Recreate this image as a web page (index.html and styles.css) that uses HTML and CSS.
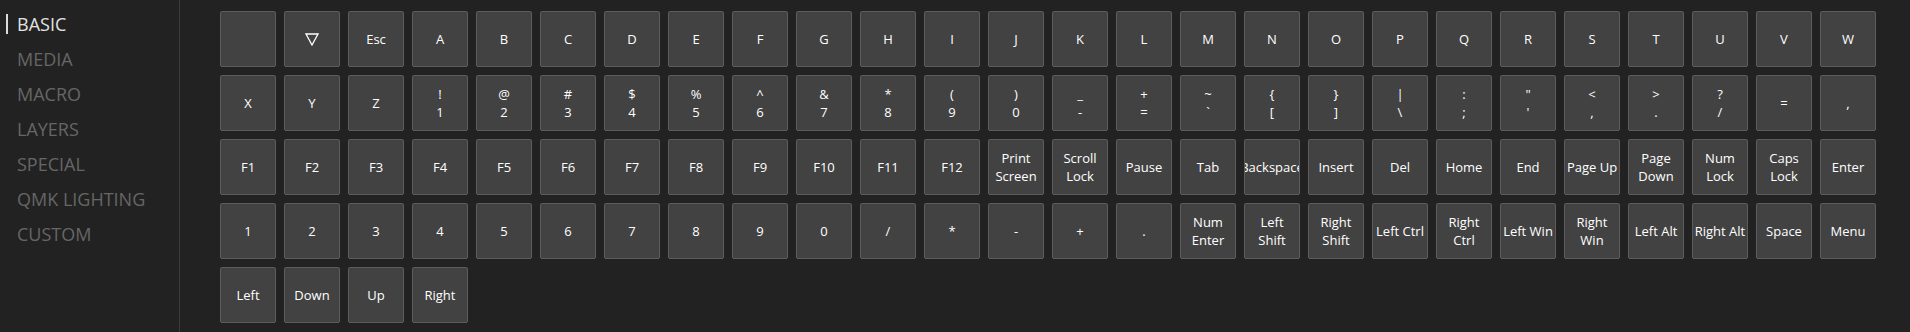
FILE: index.html
```html
<!DOCTYPE html>
<html>
<head>
<meta charset="utf-8">
<link rel="stylesheet" href="styles.css">
</head>
<body>
<div class="app">
  <nav class="sidebar">
    <div class="nav-item active"><span class="marker"></span>BASIC</div>
    <div class="nav-item"><span class="marker"></span>MEDIA</div>
    <div class="nav-item"><span class="marker"></span>MACRO</div>
    <div class="nav-item"><span class="marker"></span>LAYERS</div>
    <div class="nav-item"><span class="marker"></span>SPECIAL</div>
    <div class="nav-item"><span class="marker"></span>QMK LIGHTING</div>
    <div class="nav-item"><span class="marker"></span>CUSTOM</div>
  </nav>
  <main class="keys">
    <div class="key"></div>
    <div class="key"><svg class="tri" width="14" height="13" viewBox="0 0 14 13"><polygon points="1,1 13,1 7,12" fill="none" stroke="#fff" stroke-width="1.3"/></svg></div>
    <div class="key">Esc</div>
    <div class="key">A</div><div class="key">B</div><div class="key">C</div><div class="key">D</div><div class="key">E</div><div class="key">F</div><div class="key">G</div><div class="key">H</div><div class="key">I</div><div class="key">J</div><div class="key">K</div><div class="key">L</div><div class="key">M</div><div class="key">N</div><div class="key">O</div><div class="key">P</div><div class="key">Q</div><div class="key">R</div><div class="key">S</div><div class="key">T</div><div class="key">U</div><div class="key">V</div><div class="key">W</div>

    <div class="key">X</div><div class="key">Y</div><div class="key">Z</div>
    <div class="key">!<br>1</div><div class="key">@<br>2</div><div class="key">#<br>3</div><div class="key">$<br>4</div><div class="key">%<br>5</div><div class="key">^<br>6</div><div class="key">&amp;<br>7</div><div class="key">*<br>8</div><div class="key">(<br>9</div><div class="key">)<br>0</div>
    <div class="key">_<br>-</div><div class="key">+<br>=</div><div class="key">~<br>`</div><div class="key">{<br>[</div><div class="key">}<br>]</div><div class="key">|<br>\</div><div class="key">:<br>;</div><div class="key">"<br>'</div><div class="key">&lt;<br>,</div><div class="key">&gt;<br>.</div><div class="key">?<br>/</div>
    <div class="key">=</div><div class="key">,</div>

    <div class="key">F1</div><div class="key">F2</div><div class="key">F3</div><div class="key">F4</div><div class="key">F5</div><div class="key">F6</div><div class="key">F7</div><div class="key">F8</div><div class="key">F9</div><div class="key">F10</div><div class="key">F11</div><div class="key">F12</div>
    <div class="key">Print<br>Screen</div><div class="key">Scroll<br>Lock</div><div class="key">Pause</div><div class="key">Tab</div><div class="key">Backspace</div><div class="key">Insert</div><div class="key">Del</div><div class="key">Home</div><div class="key">End</div><div class="key">Page Up</div><div class="key">Page<br>Down</div><div class="key">Num<br>Lock</div><div class="key">Caps<br>Lock</div><div class="key">Enter</div>

    <div class="key">1</div><div class="key">2</div><div class="key">3</div><div class="key">4</div><div class="key">5</div><div class="key">6</div><div class="key">7</div><div class="key">8</div><div class="key">9</div><div class="key">0</div>
    <div class="key">/</div><div class="key">*</div><div class="key">-</div><div class="key">+</div><div class="key">.</div>
    <div class="key">Num<br>Enter</div><div class="key">Left<br>Shift</div><div class="key">Right<br>Shift</div><div class="key">Left Ctrl</div><div class="key">Right<br>Ctrl</div><div class="key">Left Win</div><div class="key">Right<br>Win</div><div class="key">Left Alt</div><div class="key">Right Alt</div><div class="key">Space</div><div class="key">Menu</div>

    <div class="key">Left</div><div class="key">Down</div><div class="key">Up</div><div class="key">Right</div>
  </main>
</div>
</body>
</html>
```

FILE: styles.css
```css
html, body {
  margin: 0;
  padding: 0;
  background: #222222;
  height: 100%;
  overflow: hidden;
}

.app {
  display: flex;
  height: 332px;
  font-family: "Open Sans", "Liberation Sans", sans-serif;
}

.sidebar {
  width: 179px;
  flex: none;
  border-right: 1px solid #3a3a3a;
  padding-top: 6px;
  box-sizing: content-box;
}

.nav-item {
  display: flex;
  align-items: center;
  height: 35px;
  font-size: 18px;
  color: #666666;
  white-space: nowrap;
}

.marker {
  width: 2px;
  height: 20px;
  margin-left: 6px;
  margin-right: 9px;
  background: transparent;
}

.nav-item.active {
  color: #e2e2e2;
}

.nav-item.active .marker {
  background: #dcdcdc;
}

.keys {
  display: flex;
  flex-wrap: wrap;
  align-content: flex-start;
  gap: 8px;
  padding: 11px 0 0 40px;
  width: 1660px;
}

.key {
  width: 56px;
  height: 56px;
  box-sizing: border-box;
  background: #424242;
  border: 1px solid #5c5c5c;
  border-radius: 2px;
  color: #ffffff;
  font-size: 13px;
  line-height: 18px;
  display: flex;
  align-items: center;
  justify-content: center;
  text-align: center;
  white-space: nowrap;
  overflow: hidden;
}

.tri {
  display: block;
}
```
